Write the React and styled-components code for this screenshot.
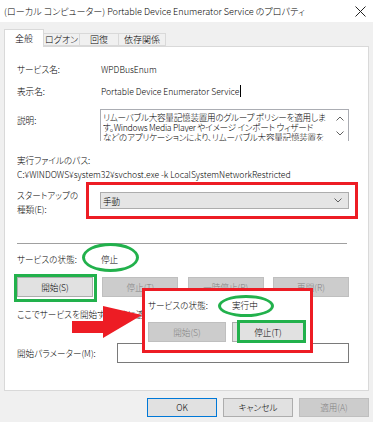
import React from 'react';
import styled, { createGlobalStyle } from 'styled-components';

const GlobalStyle = createGlobalStyle`
  html, body { margin: 0; padding: 0; background: #f0f0f0; }
  body {
    font-family: "Noto Sans CJK JP", "Noto Sans", sans-serif;
    font-size: 8.6px;
    font-weight: 300;
    color: #000;
    font-feature-settings: "palt" 1;
  }
`;

const Window = styled.div`
  position: relative;
  width: 373px;
  height: 422px;
  overflow: hidden;
  background: #f0f0f0;
  display: flex;
  flex-direction: column;
`;

const TitleBar = styled.div`
  height: 22px;
  flex: none;
  background: #fff;
  display: flex;
  align-items: center;
  justify-content: space-between;
  padding: 0 7px 0 4px;
  font-size: 9.1px;
  white-space: nowrap;
`;

const Body = styled.div`
  padding: 7px 4px 0 4px;
  display: flex;
  flex-direction: column;
`;

const Tabs = styled.div`
  display: flex;
  align-items: flex-end;
  height: 17px;
`;

const Tab = styled.div`
  position: relative;
  box-sizing: border-box;
  height: ${p => (p.$active ? '18px' : '13px')};
  margin-bottom: ${p => (p.$active ? '-1px' : '0')};
  width: ${p => p.$w}px;
  background: ${p => (p.$active ? '#fff' : '#f0f0f0')};
  border: 1px solid #d9d9d9;
  border-bottom: ${p => (p.$active ? 'none' : '1px solid #d9d9d9')};
  border-left: ${p => (p.$first || p.$active ? '1px solid #d9d9d9' : 'none')};
  z-index: ${p => (p.$active ? 2 : 1)};
  display: flex;
  align-items: center;
  justify-content: center;
  line-height: 1;
  white-space: nowrap;
  font-size: 9px;
`;

const Panel = styled.div`
  box-sizing: border-box;
  height: 345px;
  background: #fff;
  border: 1px solid #d9d9d9;
  padding: 14px 19px 0 12px;
  display: flex;
  flex-direction: column;
  overflow: hidden;
`;

const Row = styled.div`
  display: grid;
  grid-template-columns: ${p => p.$label || 84}px 1fr;
  margin-top: ${p => p.$mt || 0}px;
  line-height: ${p => p.$lh || 16}px;
  align-items: ${p => p.$align || 'center'};
`;

const Line = styled.div`
  margin-top: ${p => p.$mt || 0}px;
  line-height: 14px;
  white-space: nowrap;
  max-width: ${p => p.$max || 'none'};
  overflow: hidden;
`;

const Caret = styled.span`
  display: inline-block;
  width: 1px;
  height: 12px;
  background: #000;
  vertical-align: -2px;
  margin-left: 1px;
`;

const DescBox = styled.div`
  position: relative;
  height: 32px;
  margin-left: -1px;
  box-sizing: border-box;
  border: 1px solid #abadb3;
  border-bottom: none;
  overflow: hidden;
  padding: 2px 18px 0 2px;
  line-height: 10px;
  white-space: nowrap;
  letter-spacing: -0.25px;
`;

const DescText = styled.div`
  width: 230px;
  overflow: hidden;
`;

const ScrollCol = styled.div`
  position: absolute;
  right: 0;
  top: 0;
  width: 16px;
  height: 100%;
  display: flex;
  flex-direction: column;
  justify-content: space-between;
  align-items: center;
  padding: 6px 0 5px;
  box-sizing: border-box;
  background: #fff;
`;

const Combo = styled.div`
  height: 17px;
  margin: 4px 0 0 -1px;
  box-sizing: border-box;
  background: #e5e5e5;
  border: 1px solid #adadad;
  display: flex;
  align-items: center;
  justify-content: space-between;
  padding: 0 6px 0 2px;
`;

const Separator = styled.div`
  margin-top: 27px;
  width: 330px;
  height: 1px;
  background: #a0a0a0;
`;

const ButtonRow = styled.div`
  display: flex;
  justify-content: ${p => p.$justify || 'space-between'};
  margin-top: ${p => p.$mt || 0}px;
  gap: ${p => p.$gap || 0}px;
`;

const Button = styled.div`
  box-sizing: border-box;
  width: ${p => p.$w || 76}px;
  height: ${p => p.$h || 20}px;
  background: ${p => (p.$disabled ? '#cccccc' : '#e1e1e1')};
  border: 1px solid ${p => (p.$default ? '#0078d7' : p.$disabled ? '#bfbfbf' : '#adadad')};
  color: ${p => (p.$disabled ? '#838383' : '#000')};
  display: flex;
  align-items: center;
  justify-content: center;
  line-height: 1;
`;

const Input = styled.div`
  height: 20px;
  box-sizing: border-box;
  border: 1px solid #7a7a7a;
  background: #fff;
`;

const Footer = styled.div`
  display: flex;
  justify-content: flex-end;
  gap: 6px;
  margin-top: 7px;
`;

const RedBox = styled.div`
  position: absolute;
  box-sizing: border-box;
  border: 3px solid #ed1c24;
`;

const GreenMark = styled.div`
  position: absolute;
  box-sizing: border-box;
  border: 3px solid #22b14c;
  border-radius: ${p => (p.$round ? '50%' : '0')};
`;

const Inset = styled.div`
  position: absolute;
  left: 142px;
  top: 288px;
  width: 171px;
  height: 65px;
  box-sizing: border-box;
  border: 3.5px solid #ed1c24;
  background: #fff;
  padding: 7px 0 0 3px;
  display: flex;
  flex-direction: column;
`;

const InsetStatus = styled.div`
  display: grid;
  grid-template-columns: 84px 1fr;
  line-height: 14px;
`;

const Arrow = styled.svg`
  position: absolute;
  left: 70px;
  top: 302px;
`;

const Chevron = ({ up }) => (
  <svg width="8" height="5" viewBox="0 0 8 5">
    <polyline
      points={up ? '0.5,4.5 4,1 7.5,4.5' : '0.5,0.5 4,4 7.5,0.5'}
      fill="none"
      stroke="#606060"
      strokeWidth="1"
    />
  </svg>
);

export default function App() {
  return (
    <>
      <GlobalStyle />
      <Window>
        <TitleBar>
          <span>(ローカル コンピューター) Portable Device Enumerator Service のプロパティ</span>
          <svg width="11" height="11" viewBox="0 0 11 11">
            <path d="M0.5 0.5 L10.5 10.5 M10.5 0.5 L0.5 10.5" stroke="#222" strokeWidth="1" />
          </svg>
        </TitleBar>
        <Body>
          <Tabs>
            <Tab $active $first $w={40}>全般</Tab>
            <Tab $w={36}>ログオン</Tab>
            <Tab $w={39}>回復</Tab>
            <Tab $w={47}>依存関係</Tab>
          </Tabs>
          <Panel>
            <Row>
              <span>サービス名:</span>
              <span>WPDBusEnum</span>
            </Row>
            <Row $mt={6}>
              <span>表示名:</span>
              <span>Portable Device Enumerator Service<Caret /></span>
            </Row>
            <Row $mt={10} $align="start">
              <span style={{ paddingTop: 3 }}>説明:</span>
              <DescBox>
                <DescText>リムーバブル大容量記憶装置用のグループ ポリシーを適用しま</DescText>
                <DescText>す。Windows Media Player やイメージ インポート ウィザード</DescText>
                <DescText>などのアプリケーションにより、リムーバブル大容量記憶装置を</DescText>
                <ScrollCol>
                  <Chevron up />
                  <Chevron />
                </ScrollCol>
              </DescBox>
            </Row>
            <Line $mt={12}>実行ファイルのパス:</Line>
            <Line>C:¥WINDOWS¥system32¥svchost.exe -k LocalSystemNetworkRestricted</Line>
            <Row $mt={7} $lh={14} $align="start">
              <span>スタートアップの<br />種類(E):</span>
              <Combo>
                <span>手動</span>
                <Chevron />
              </Combo>
            </Row>
            <Separator />
            <Row $mt={7}>
              <span>サービスの状態:</span>
              <span>停止</span>
            </Row>
            <ButtonRow $mt={10}>
              <Button>開始(S)</Button>
              <Button $disabled>停止(T)</Button>
              <Button $disabled>一時停止(P)</Button>
              <Button $disabled>再開(R)</Button>
            </ButtonRow>
            <Line $mt={10} $max="125px">ここでサービスを開始するときに適用する開始パラメーターを指定してください。</Line>
            <Row $mt={22} $label={100}>
              <span>開始パラメーター(M):</span>
              <Input />
            </Row>
          </Panel>
          <Footer>
            <Button $default $w={70} $h={19}>OK</Button>
            <Button $w={70} $h={19}>キャンセル</Button>
            <Button $disabled $w={70} $h={19}>適用(A)</Button>
          </Footer>
        </Body>

        <RedBox style={{ left: 86, top: 182, width: 272, height: 37 }} />
        <GreenMark $round style={{ left: 82, top: 243, width: 57, height: 29 }} />
        <GreenMark style={{ left: 14, top: 274, width: 83, height: 28 }} />
        <Arrow width="75" height="38" viewBox="0 0 75 38">
          <polygon points="2,19 33,19 33,4 72,13 33,36 33,31 2,31" fill="#ed1c24" />
        </Arrow>
        <Inset>
          <InsetStatus>
            <span>サービスの状態:</span>
            <span>実行中</span>
          </InsetStatus>
          <ButtonRow $mt={10} $gap={6} $justify="flex-start">
            <Button $disabled $w={78}>開始(S)</Button>
            <Button $w={72}>停止(T)</Button>
          </ButtonRow>
        </Inset>
        <GreenMark $round style={{ left: 218, top: 295, width: 56, height: 22 }} />
        <GreenMark style={{ left: 237, top: 320, width: 69, height: 23 }} />
      </Window>
    </>
  );
}
